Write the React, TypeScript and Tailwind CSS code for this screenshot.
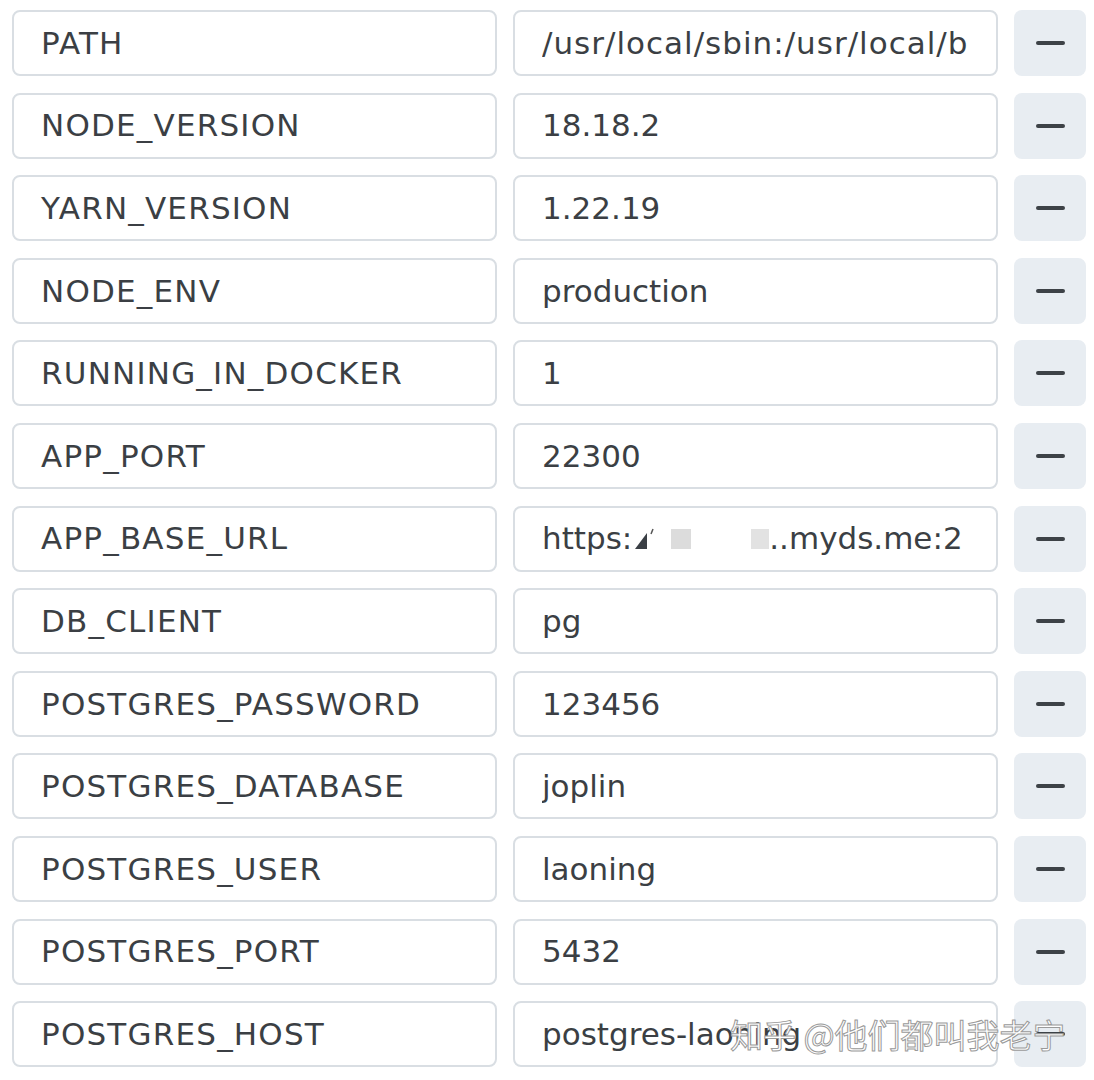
import React from "react";

const rows: [string, string][] = [
  ["PATH", "/usr/local/sbin:/usr/local/bin:/usr/sbin:/usr/bin"],
  ["NODE_VERSION", "18.18.2"],
  ["YARN_VERSION", "1.22.19"],
  ["NODE_ENV", "production"],
  ["RUNNING_IN_DOCKER", "1"],
  ["APP_PORT", "22300"],
  ["APP_BASE_URL", "__URL__"],
  ["DB_CLIENT", "pg"],
  ["POSTGRES_PASSWORD", "123456"],
  ["POSTGRES_DATABASE", "joplin"],
  ["POSTGRES_USER", "laoning"],
  ["POSTGRES_PORT", "5432"],
  ["POSTGRES_HOST", "postgres-laoning"],
];

function UrlValue() {
  return (
    <span className="flex items-center whitespace-nowrap">
      <span>https:</span>
      <svg width="24" height="24" viewBox="0 0 24 24" className="ml-[1px]">
        <polygon points="2,22 14,6 14,22" fill="#3a3f45" />
        <line x1="18" y1="7" x2="20" y2="2" stroke="#555" strokeWidth="1.5" />
      </svg>
      <span className="ml-[14px] inline-block w-[20px] h-[20px] bg-[#dcdcdc]" />
      <span className="ml-[60px] inline-block w-[18px] h-[20px] bg-[#e2e2e2]" />
      <span>..myds.me:2</span>
    </span>
  );
}

export default function App() {
  return (
    <div
      className="relative w-[1094px] h-[1080px] bg-white overflow-hidden"
      style={{ fontFamily: '"DejaVu Sans", Verdana, sans-serif' }}
    >
      <div className="flex flex-col gap-[16.6px] pt-[10px] pl-[12px]">
        {rows.map(([k, v]) => (
          <div key={k} className="flex items-center h-[66px]">
            <div className="w-[485px] h-[66px] border-2 border-[#d9dee3] rounded-[8px] flex items-center pl-[27px] pr-[27px] text-[31px] tracking-[1.2px] text-[#3b3f44] overflow-hidden whitespace-nowrap">
              {k}
            </div>
            <div className="ml-[16px] w-[485px] h-[66px] border-2 border-[#d9dee3] rounded-[8px] flex items-center pl-[27px] pr-[26px] text-[31px] text-[#3b3f44]">
              <div
                className={
                  k === "PATH"
                    ? "flex-1 overflow-hidden whitespace-nowrap tracking-[1px]"
                    : "flex-1 overflow-hidden whitespace-nowrap"
                }
              >
                {v === "__URL__" ? <UrlValue /> : v}
              </div>
            </div>
            <div className="ml-[16px] w-[72px] h-[66px] rounded-[8px] bg-[#e8edf2] flex items-center justify-center">
              <div className="w-[29px] h-[4px] rounded-full bg-[#3d4247]" />
            </div>
          </div>
        ))}
      </div>
      <div
        className="absolute left-[730px] top-[1010px] text-[33px] text-white whitespace-nowrap [-webkit-text-stroke:1px_#9a9a9a]"
        style={{ fontFamily: '"Noto Sans CJK SC", "DejaVu Sans", sans-serif' }}
      >
        知乎 @他们都叫我老宁
      </div>
    </div>
  );
}
